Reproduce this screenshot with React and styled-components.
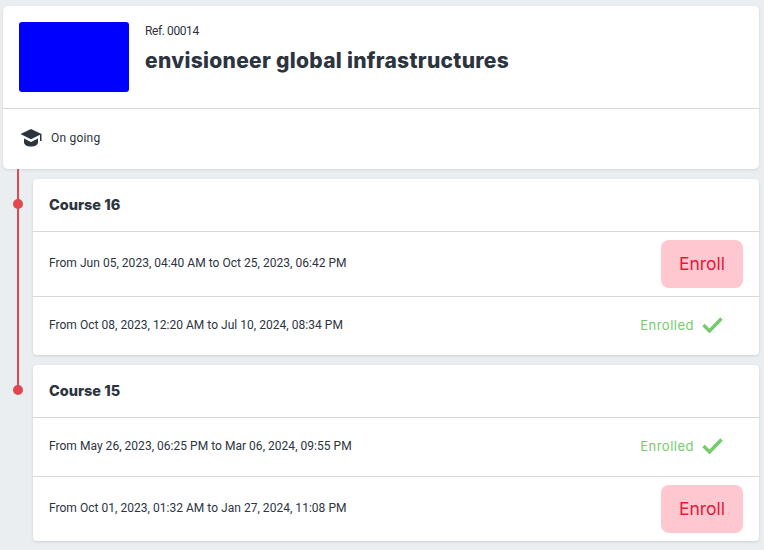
import React from "react";
import styled, { createGlobalStyle } from "styled-components";

const GlobalStyle = createGlobalStyle`
  html, body {
    margin: 0;
    height: 550px;
    overflow: hidden;
    background: #ebeef0;
    font-family: Roboto, "Noto Sans", sans-serif;
    color: #2c3440;
  }
`;

const Page = styled.div`
  padding: 6px 5px 0 3px;
`;
const HeaderCard = styled.div`
  background: #fff;
  border-radius: 5px;
  box-shadow: 0 1px 3px rgba(0, 0, 0, 0.1);
`;
const HeaderTop = styled.div`
  display: flex;
  align-items: flex-start;
  gap: 16px;
  height: 103px;
  padding: 16px 16px 0;
  box-sizing: border-box;
  border-bottom: 1px solid #d8d8da;
`;
const Thumb = styled.div`
  width: 110px;
  height: 70px;
  background: #0000ff;
  border-radius: 3px;
`;
const Ref = styled.div`
  font-size: 12px;
  line-height: 16px;
  margin-top: 1px;
  letter-spacing: -0.4px;
`;
const Title = styled.h1`
  margin: 9px 0 0;
  font-family: Inter, sans-serif;
  font-size: 21px;
  line-height: 26px;
  font-weight: 800;
  letter-spacing: 0.3px;
`;
const Status = styled.div`
  display: flex;
  align-items: center;
  gap: 9px;
  height: 60px;
  box-sizing: border-box;
  padding: 0 0 2px 17px;
  font-size: 12px;
  letter-spacing: 0.2px;
`;
const Timeline = styled.div`
  position: relative;
  padding: 10px 0 0 30px;
  display: flex;
  flex-direction: column;
  gap: 10px;
  &::before {
    content: "";
    position: absolute;
    left: 14px;
    top: 0;
    width: 2px;
    height: 221px;
    background: #e2474f;
  }
`;
const Course = styled.section`
  position: relative;
  background: #fff;
  border-radius: 4px;
  box-shadow: 0 1px 3px rgba(0, 0, 0, 0.12);
  &::before {
    content: "";
    position: absolute;
    left: -20px;
    top: 20px;
    width: 10px;
    height: 10px;
    border-radius: 50%;
    background: #e2474f;
  }
`;
const CourseName = styled.h2`
  margin: 0;
  height: 52px;
  box-sizing: border-box;
  display: flex;
  align-items: center;
  padding: 0 0 1px 16px;
  font-family: Inter, sans-serif;
  font-size: 14.5px;
  font-weight: 800;
`;
const Row = styled.div`
  display: flex;
  align-items: center;
  justify-content: space-between;
  height: ${(p) => p.$height}px;
  padding: 0 16px;
  border-top: 1px solid #d8d8da;
  font-size: 12px;
  letter-spacing: 0.03px;
`;
const Period = styled.span`
  margin-bottom: 2px;
`;
const EnrollButton = styled.button`
  width: 82px;
  height: 48px;
  border: 0;
  padding: 0 0 2px;
  border-radius: 8px;
  background: #ffc8d0;
  color: #e8173a;
  font-family: Inter, sans-serif;
  font-size: 17.5px;
`;
const Enrolled = styled.div`
  display: flex;
  align-items: center;
  gap: 8px;
  margin: 0 20px 2px 0;
  color: #74cc6c;
  font-family: Inter, sans-serif;
  font-size: 13px;
  letter-spacing: 0.5px;
`;

const CapIcon = () => (
  <svg width="22" height="18" viewBox="0 0 22 18" fill="#2c3440">
    <path d="M11 0 0.5 5 11 10.2 20 5.8V12H21.5V5L11 0Z" />
    <path d="M4 9.6V13.5C4 15.8 7.2 17.6 11 17.6S18 15.8 18 13.5V9.6L11 13 4 9.6Z" />
  </svg>
);

const CheckIcon = () => (
  <svg width="21" height="16" viewBox="0 0 21 16" fill="none" stroke="#74cc6c" strokeWidth="3.4">
    <path d="M1.5 8 7.5 14 19.5 1.5" />
  </svg>
);

const courses = [
  {
    name: "Course 16",
    rows: [
      { text: "From Jun 05, 2023, 04:40 AM to Oct 25, 2023, 06:42 PM", enrolled: false, height: 64 },
      { text: "From Oct 08, 2023, 12:20 AM to Jul 10, 2024, 08:34 PM", enrolled: true, height: 58 },
    ],
  },
  {
    name: "Course 15",
    rows: [
      { text: "From May 26, 2023, 06:25 PM to Mar 06, 2024, 09:55 PM", enrolled: true, height: 58 },
      { text: "From Oct 01, 2023, 01:32 AM to Jan 27, 2024, 11:08 PM", enrolled: false, height: 64 },
    ],
  },
];

export default function App() {
  return (
    <Page>
      <GlobalStyle />
      <HeaderCard>
        <HeaderTop>
          <Thumb />
          <div>
            <Ref>Ref. 00014</Ref>
            <Title>envisioneer global infrastructures</Title>
          </div>
        </HeaderTop>
        <Status>
          <CapIcon />
          On going
        </Status>
      </HeaderCard>
      <Timeline>
        {courses.map((course) => (
          <Course key={course.name}>
            <CourseName>{course.name}</CourseName>
            {course.rows.map((row) => (
              <Row key={row.text} $height={row.height}>
                <Period>{row.text}</Period>
                {row.enrolled ? (
                  <Enrolled>
                    Enrolled <CheckIcon />
                  </Enrolled>
                ) : (
                  <EnrollButton>Enroll</EnrollButton>
                )}
              </Row>
            ))}
          </Course>
        ))}
      </Timeline>
    </Page>
  );
}
